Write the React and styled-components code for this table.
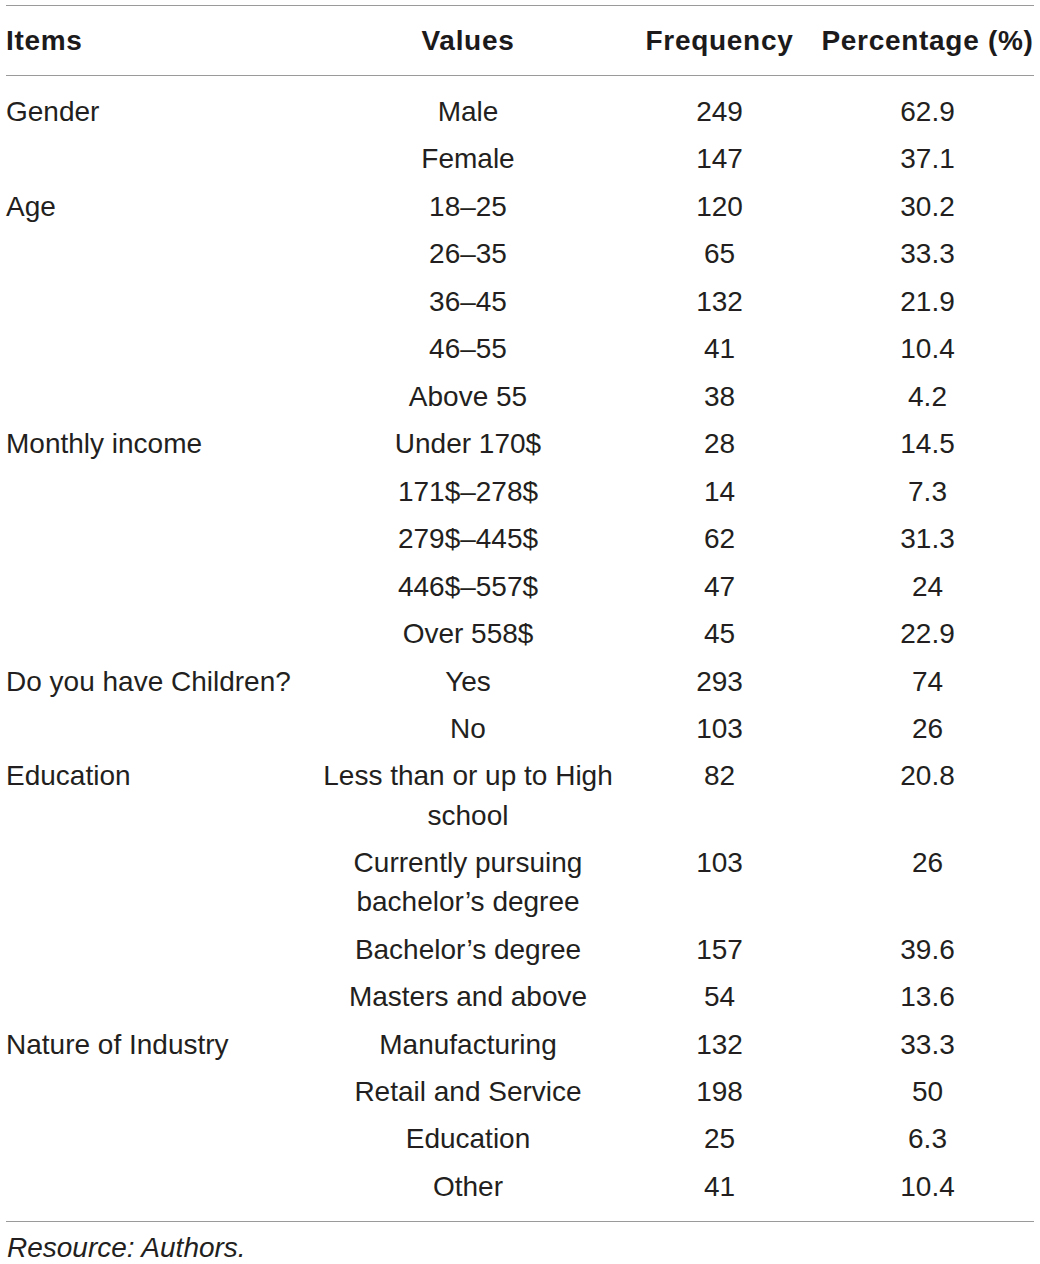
import React from 'react'
import styled, { createGlobalStyle } from 'styled-components'

const GlobalStyle = createGlobalStyle`
    body {
        margin: 0;
        background: #ffffff;
        font-family: "Liberation Sans", Arial, sans-serif;
        color: #231f20;
    }
`

const Page = styled.div`
    width: 1040px;
    padding: 5px 6px 0 6px;
    box-sizing: border-box;
`

const Table = styled.div`
    width: 1028px;
    border-top: 1px solid #9a9a9a;
    border-bottom: 1px solid #9a9a9a;
`

const Row = styled.div`
    display: grid;
    grid-template-columns: 312px 300px 203px 213px;
    align-items: start;
`

const HeadRow = styled(Row)`
    padding: 15px 0 15px 0;
    border-bottom: 1px solid #9a9a9a;
    font-weight: 700;
    color: #1c1a1b;
`

const Body = styled.div`
    padding: 11.6px 0 11px 0;
`

const BodyRow = styled(Row)`
    padding: 4.2px 0;
`

const Cell = styled.div`
    font-size: 28px;
    line-height: 39.1px;
    text-align: ${p => (p.$left ? 'left' : 'center')};
    letter-spacing: ${p => (p.$head ? '0.7px' : '0')};
    white-space: ${p => (p.$left || p.$head ? 'nowrap' : 'normal')};
`

const Note = styled.div`
    padding: 6px 0 0 1px;
    font-size: 28px;
    line-height: 39px;
    font-style: italic;
`

const groups = [
    { item: 'Gender', rows: [['Male', 249, '62.9'], ['Female', 147, '37.1']] },
    {
        item: 'Age',
        rows: [
            ['18–25', 120, '30.2'],
            ['26–35', 65, '33.3'],
            ['36–45', 132, '21.9'],
            ['46–55', 41, '10.4'],
            ['Above 55', 38, '4.2'],
        ],
    },
    {
        item: 'Monthly income',
        rows: [
            ['Under 170$', 28, '14.5'],
            ['171$–278$', 14, '7.3'],
            ['279$–445$', 62, '31.3'],
            ['446$–557$', 47, '24'],
            ['Over 558$', 45, '22.9'],
        ],
    },
    { item: 'Do you have Children?', rows: [['Yes', 293, '74'], ['No', 103, '26']] },
    {
        item: 'Education',
        rows: [
            ['Less than or up to High school', 82, '20.8'],
            ['Currently pursuing bachelor’s degree', 103, '26'],
            ['Bachelor’s degree', 157, '39.6'],
            ['Masters and above', 54, '13.6'],
        ],
    },
    {
        item: 'Nature of Industry',
        rows: [
            ['Manufacturing', 132, '33.3'],
            ['Retail and Service', 198, '50'],
            ['Education', 25, '6.3'],
            ['Other', 41, '10.4'],
        ],
    },
]

const App = () => {
    return (
        <Page>
            <GlobalStyle />
            <Table>
                <HeadRow>
                    <Cell $left $head>Items</Cell>
                    <Cell $head>Values</Cell>
                    <Cell $head>Frequency</Cell>
                    <Cell $head>Percentage (%)</Cell>
                </HeadRow>
                <Body>
                    {groups.map(g =>
                        g.rows.map((r, i) => (
                            <BodyRow key={g.item + r[0]}>
                                <Cell $left>{i === 0 ? g.item : ''}</Cell>
                                <Cell>{r[0]}</Cell>
                                <Cell>{r[1]}</Cell>
                                <Cell>{r[2]}</Cell>
                            </BodyRow>
                        ))
                    )}
                </Body>
            </Table>
            <Note>Resource: Authors.</Note>
        </Page>
    )
}

export default App
